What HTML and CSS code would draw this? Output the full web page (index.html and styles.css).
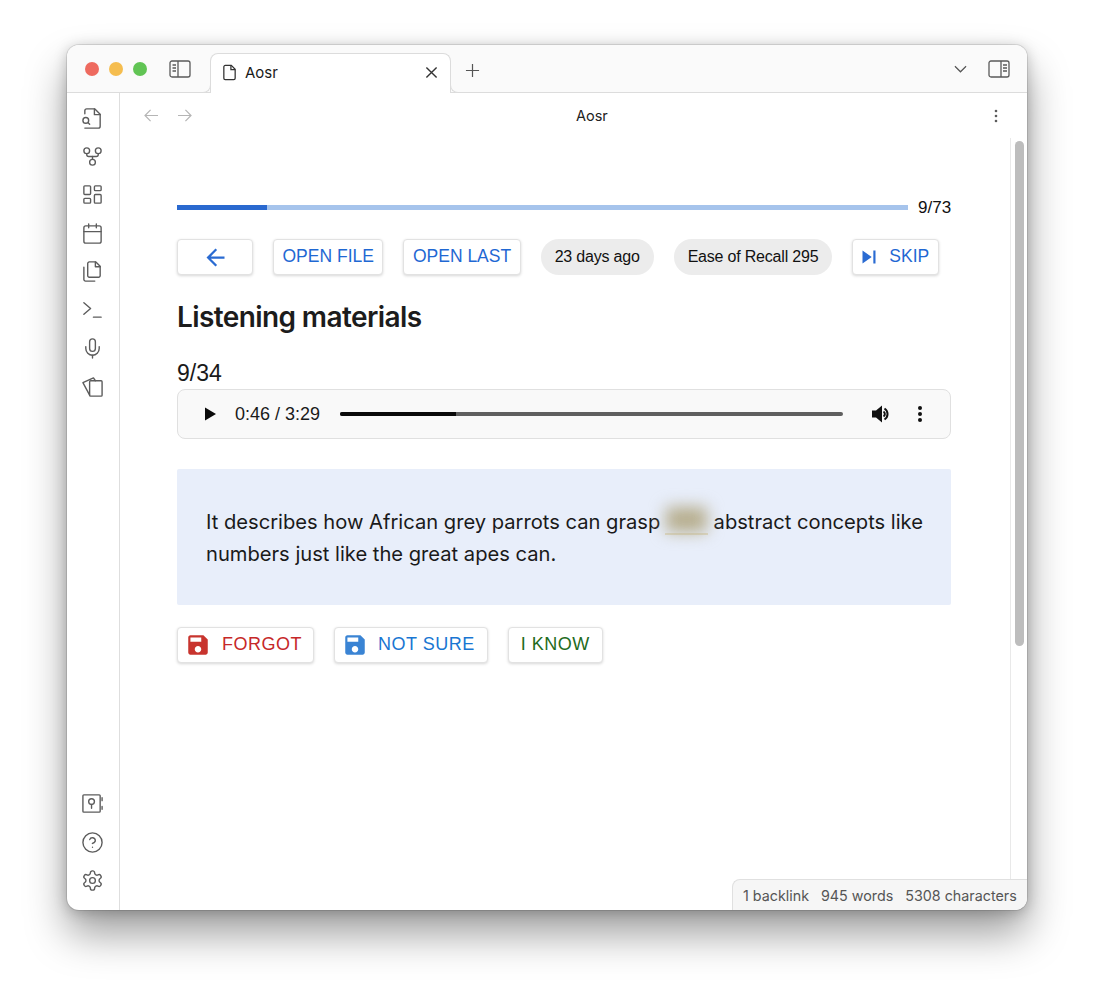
FILE: index.html
```html
<!DOCTYPE html>
<html lang="en">
<head>
<meta charset="utf-8">
<title>Aosr</title>
<link rel="stylesheet" href="styles.css">
</head>
<body>
<div class="window">
  <header class="titlebar">
    <div class="lights"><span class="light red"></span><span class="light yellow"></span><span class="light green"></span></div>
    <svg class="tb-toggle" viewBox="0 0 22 18"><rect x="1" y="1" width="20" height="16" rx="2"/><path d="M9 1v16M3.500 5H7M3.500 8H7M3.500 11H7"/></svg>
    <div class="tab">
      <svg class="tab-file" viewBox="0 0 24 24"><path d="M14.500 2H6a2 2 0 0 0-2 2v16a2 2 0 0 0 2 2h12a2 2 0 0 0 2-2V7.500z"/><path d="M14 2v6h6"/></svg>
      <span class="tab-title">Aosr</span>
      <svg class="tab-close" viewBox="0 0 14 14"><path d="M1.500 1.500l11 11M12.500 1.500l-11 11"/></svg>
    </div>
    <svg class="tab-plus" viewBox="0 0 16 16"><path d="M8 1v14M1 8h14"/></svg>
    <div class="tb-right">
      <svg class="tb-chevron" viewBox="0 0 14 8"><path d="M1 1l6 6 6-6"/></svg>
      <svg class="tb-toggle" viewBox="0 0 22 18"><rect x="1" y="1" width="20" height="16" rx="2"/><path d="M13 1v16M15 5h4M15 8h4M15 11h4"/></svg>
    </div>
  </header>
  <div class="main">
    <nav class="ribbon">
      <div class="ribbon-group">
        <svg class="ri" viewBox="0 0 24 24"><path d="M4 22h14a2 2 0 0 0 2-2V7.500L14.500 2H6a2 2 0 0 0-2 2v3"/><path d="M14 2v6h6"/><circle cx="5" cy="14" r="3"/><path d="m9 18-1.500-1.500"/></svg>
        <svg class="ri" viewBox="0 0 24 24"><circle cx="12" cy="18" r="3"/><circle cx="6" cy="6" r="3"/><circle cx="18" cy="6" r="3"/><path d="M18 9v1a2 2 0 0 1-2 2H8a2 2 0 0 1-2-2V9"/><path d="M12 12v3"/></svg>
        <svg class="ri" viewBox="0 0 24 24"><rect x="3" y="3" width="7" height="9" rx="1"/><rect x="14" y="3" width="7" height="5" rx="1"/><rect x="14" y="12" width="7" height="9" rx="1"/><rect x="3" y="16" width="7" height="5" rx="1"/></svg>
        <svg class="ri" viewBox="0 0 24 24"><rect x="3" y="4" width="18" height="18" rx="2"/><path d="M16 2v4M8 2v4M3 10h18"/></svg>
        <svg class="ri" viewBox="0 0 24 24"><path d="M15.500 2H8.600c-.4 0-.8.2-1.100.5-.3.3-.5.7-.5 1.100v12.800c0 .4.2.8.5 1.100.3.3.7.5 1.100.5h9.800c.4 0 .8-.2 1.100-.5.3-.3.5-.7.5-1.100V6.500L15.500 2z"/><path d="M3 7.600v12.800c0 .4.2.8.5 1.100.3.3.7.5 1.100.5h9.800"/><path d="M15 2v5h5"/></svg>
        <svg class="ri" viewBox="0 0 24 24"><path d="M3 17l7-6-7-6"/><path d="M13 20h8"/></svg>
        <svg class="ri" viewBox="0 0 24 24"><path d="M12 2a3 3 0 0 0-3 3v7a3 3 0 0 0 6 0V5a3 3 0 0 0-3-3Z"/><path d="M19 10v2a7 7 0 0 1-14 0v-2"/><path d="M12 19v3"/></svg>
        <svg class="ri" viewBox="0 0 24 24"><rect x="9" y="6" width="13" height="16" rx="1"/><path d="M9 21 2 8l11-5 2 3"/></svg>
      </div>
      <div class="ribbon-group">
        <svg class="ri" viewBox="0 0 24 24"><rect x="2" y="3" width="18" height="18" rx="1"/><circle cx="11" cy="10" r="3"/><path d="M11 13v4M22 6v3M22 15v3"/></svg>
        <svg class="ri" viewBox="0 0 24 24"><circle cx="12" cy="12" r="10"/><path d="M9.090 9a3 3 0 0 1 5.830 1c0 2-3 3-3 3"/><path d="M12 17h.01"/></svg>
        <svg class="ri" viewBox="0 0 24 24"><path d="M12.220 2h-.44a2 2 0 0 0-2 2v.18a2 2 0 0 1-1 1.730l-.43.25a2 2 0 0 1-2 0l-.15-.08a2 2 0 0 0-2.730.73l-.22.38a2 2 0 0 0 .73 2.730l.15.1a2 2 0 0 1 1 1.720v.51a2 2 0 0 1-1 1.740l-.15.09a2 2 0 0 0-.73 2.730l.22.38a2 2 0 0 0 2.730.73l.15-.08a2 2 0 0 1 2 0l.43.25a2 2 0 0 1 1 1.730V20a2 2 0 0 0 2 2h.44a2 2 0 0 0 2-2v-.18a2 2 0 0 1 1-1.730l.43-.25a2 2 0 0 1 2 0l.15.08a2 2 0 0 0 2.730-.73l.22-.39a2 2 0 0 0-.73-2.730l-.15-.08a2 2 0 0 1-1-1.740v-.5a2 2 0 0 1 1-1.740l.15-.09a2 2 0 0 0 .73-2.730l-.22-.38a2 2 0 0 0-2.730-.73l-.15.08a2 2 0 0 1-2 0l-.43-.25a2 2 0 0 1-1-1.730V4a2 2 0 0 0-2-2z"/><circle cx="12" cy="12" r="3"/></svg>
      </div>
    </nav>
    <section class="pane">
      <div class="pane-head">
        <div class="pane-nav">
          <svg class="nav-arrow" viewBox="0 0 16 14"><path d="M15 7H1M7 1 1 7l6 6"/></svg>
          <svg class="nav-arrow" viewBox="0 0 16 14"><path d="M1 7h14M9 1l6 6-6 6"/></svg>
        </div>
        <div class="pane-title">Aosr</div>
        <svg class="pane-more" viewBox="0 0 4 14"><circle cx="2" cy="2" r="1.300"/><circle cx="2" cy="7" r="1.300"/><circle cx="2" cy="12" r="1.300"/></svg>
      </div>
      <div class="pane-body">
        <div class="scroll">
          <div class="progress-row">
            <div class="progress"><div class="progress-fill"></div></div>
            <span class="progress-label">9/73</span>
          </div>
          <div class="btn-row top-actions">
            <button class="btn btn-back"><svg class="back-icon" viewBox="0 0 24 24"><path d="M20 11H7.830l5.590-5.590L12 4l-8 8 8 8 1.410-1.410L7.830 13H20v-2z"/></svg></button>
            <button class="btn">OPEN FILE</button>
            <button class="btn">OPEN LAST</button>
            <span class="pill">23 days ago</span>
            <span class="pill">Ease of Recall 295</span>
            <button class="btn btn-skip"><svg class="skip-icon" viewBox="0 0 24 24"><path d="M6 18l8.500-6L6 6v12zM16 6v12h2V6h-2z"/></svg>SKIP</button>
          </div>
          <h1 class="heading">Listening materials</h1>
          <div class="count">9/34</div>
          <div class="audio">
            <svg class="play" viewBox="0 0 12 14"><path d="M0 0l12 7-12 7z"/></svg>
            <span class="time">0:46 / 3:29</span>
            <div class="track"><div class="track-fill"></div></div>
            <svg class="volume" viewBox="0 0 20 20"><path d="M0 6.500h4L10 1.500v17l-6-5H0z"/><path class="vol-wave" d="M12.500 4.500a6.500 6.500 0 0 1 0 11M11.500 7.500a3 3 0 0 1 0 5"/></svg>
            <svg class="audio-more" viewBox="0 0 4 16"><circle cx="2" cy="2" r="2"/><circle cx="2" cy="8" r="2"/><circle cx="2" cy="14" r="2"/></svg>
          </div>
          <div class="card">It describes how African grey parrots can grasp <span class="hidden-word"></span> abstract concepts like numbers just like the great apes can.</div>
          <div class="btn-row answers">
            <button class="btn btn-forgot"><svg class="save-icon" viewBox="0 0 24 24"><path d="M17 3H5c-1.110 0-2 .9-2 2v14c0 1.100.89 2 2 2h14c1.100 0 2-.9 2-2V7l-4-4zm-5 16c-1.660 0-3-1.340-3-3s1.340-3 3-3 3 1.340 3 3-1.340 3-3 3zm3-10H5V5h10v4z"/></svg>FORGOT</button>
            <button class="btn btn-unsure"><svg class="save-icon" viewBox="0 0 24 24"><path d="M17 3H5c-1.110 0-2 .9-2 2v14c0 1.100.89 2 2 2h14c1.100 0 2-.9 2-2V7l-4-4zm-5 16c-1.660 0-3-1.340-3-3s1.340-3 3-3 3 1.340 3 3-1.340 3-3 3zm3-10H5V5h10v4z"/></svg>NOT SURE</button>
            <button class="btn btn-know">I KNOW</button>
          </div>
        </div>
        <div class="scrollbar"><div class="thumb"></div></div>
      </div>
      <div class="status"><span>1 backlink</span><span>945 words</span><span>5308 characters</span></div>
    </section>
  </div>
</div>
</body>
</html>
```

FILE: styles.css
```css
* { box-sizing: border-box; }
html, body { margin: 0; padding: 0; }
body { width: 1094px; height: 998px; padding: 45px 67px 0; background: #fff; overflow: hidden; font-family: "Liberation Sans", Arial, sans-serif; color: #1a1a1a; }
svg { display: block; flex: none; }

.window { width: 960px; height: 865px; border-radius: 12px; background: #fff; overflow: hidden; display: flex; flex-direction: column; box-shadow: 0 0 0 1px rgba(0,0,0,.1), 0 24px 42px rgba(0,0,0,.38), 0 2px 14px rgba(0,0,0,.22); }

.titlebar { height: 48px; flex: none; display: flex; align-items: center; background: #fafafa; border-bottom: 1px solid #dcdcdc; padding-left: 18px; }
.lights { display: flex; gap: 10px; }
.light { width: 14px; height: 14px; border-radius: 50%; }
.red { background: #ee6a5f; }
.yellow { background: #f5bd4f; }
.green { background: #61c454; }
.tb-toggle { width: 22px; height: 18px; fill: none; stroke: #5a5a5a; stroke-width: 1.300; }
.titlebar > .tb-toggle { margin-left: 22px; }
.tab { position: relative; align-self: flex-end; width: 241px; height: 40px; margin: 0 0 -1px 19px; padding: 0 12px 2px 10px; display: flex; align-items: center; background: #fff; border: 1px solid #dcdcdc; border-bottom: 0; border-radius: 8px 8px 0 0; }
.tab::before, .tab::after { content: ""; position: absolute; bottom: 0; width: 8px; height: 8px; background: #fafafa; border-bottom: 1px solid #dcdcdc; }
.tab::before { left: -9px; border-right: 1px solid #dcdcdc; border-bottom-right-radius: 8px; }
.tab::after { right: -9px; border-left: 1px solid #dcdcdc; border-bottom-left-radius: 8px; }
.tab-file { width: 17px; height: 17px; fill: none; stroke: #333; stroke-width: 1.800; }
.tab-title { margin-left: 7px; font: 400 15px "Inter", sans-serif; color: #1a1a1a; }
.tab-close { width: 13px; height: 13px; margin-left: auto; fill: none; stroke: #333; stroke-width: 1.500; }
.tab-plus { width: 15px; height: 15px; margin: 3px 0 0 14px; fill: none; stroke: #555; stroke-width: 1.300; }
.tb-right { margin-left: auto; display: flex; align-items: center; gap: 21px; padding-right: 17px; }
.tb-chevron { width: 13px; height: 8px; fill: none; stroke: #555; stroke-width: 1.300; }

.main { flex: 1; min-height: 0; display: flex; }
.ribbon { width: 53px; flex: none; border-right: 1px solid #dedede; display: flex; flex-direction: column; justify-content: space-between; align-items: center; padding: 13.500px 1px 18px 0; }
.ribbon-group { display: flex; flex-direction: column; gap: 15.400px; align-items: center; }
.ri { width: 23px; height: 23px; fill: none; stroke: #5c5c5c; stroke-width: 1.450; stroke-linecap: round; stroke-linejoin: round; }

.pane { position: relative; flex: 1; min-width: 0; display: flex; flex-direction: column; }
.pane-head { height: 45px; flex: none; position: relative; display: flex; align-items: center; justify-content: space-between; padding: 0 29px 0 24px; }
.pane-nav { display: flex; gap: 18px; }
.nav-arrow { width: 15px; height: 13px; fill: none; stroke: #b5b5b5; stroke-width: 1.300; }
.pane-title { font: 400 14.500px "Inter", sans-serif; color: #222; position: absolute; left: 456px; top: 14px; }
.pane-more { width: 4px; height: 14px; fill: #5c5c5c; }

.pane-body { flex: 1; min-height: 0; display: flex; }
.scroll { flex: 1; min-width: 0; padding: 59px 59px 0 57px; }
.scrollbar { width: 17px; flex: none; border-left: 1px solid #e9e9e9; padding: 3px 3px 0 4px; }
.thumb { height: 505px; background: #bdbdbd; border-radius: 5px; }

.progress-row { display: flex; align-items: center; height: 20px; white-space: nowrap; }
.progress { width: 731px; height: 5px; flex: none; background: #a6c4ec; }
.progress-fill { width: 90px; height: 100%; background: #2a69cf; }
.progress-label { margin-left: 10px; padding-top: 2px; font-size: 17px; color: #111; }

.btn-row { display: flex; gap: 20px; margin-top: 22px; align-items: center; white-space: nowrap; }
.btn { height: 36px; padding: 0 8.500px 1px; display: inline-flex; flex: none; align-items: center; background: #fff; border: 1px solid #e2e2e2; border-radius: 4px; box-shadow: 0 1px 3px rgba(0,0,0,.16); font: 18px "Liberation Sans", Arial, sans-serif; letter-spacing: .5px; color: #1f68d3; }
.top-actions .btn { font-size: 17.500px; letter-spacing: 0; }
.top-actions .btn-back { width: 76px; justify-content: center; padding: 0; }
.back-icon { width: 27px; height: 27px; fill: #2a6bd2; }
.top-actions .btn-skip { padding: 0 9px 1px 3px; gap: 7px; }
.skip-icon { width: 26px; height: 26px; fill: #2a6bd2; }
.pill { height: 36px; padding: 0 14px; display: inline-flex; flex: none; align-items: center; background: #ececec; border-radius: 18px; font-size: 16px; letter-spacing: -.2px; color: #111; }

.heading { margin: 25px 0 0; font: 600 28px/34px "Inter", sans-serif; letter-spacing: -.6px; color: #1c1c1c; }
.count { margin-top: 26px; font-size: 23px; line-height: 26px; color: #1a1a1a; }
.audio { margin-top: 3px; height: 50px; display: flex; align-items: center; background: #f9f9f9; border: 1px solid #e0e0e0; border-radius: 8px; padding: 0 29px 0 27px; white-space: nowrap; }
.play { width: 11px; height: 14px; fill: #0a0a0a; }
.time { margin-left: 19px; font-size: 18px; color: #1a1a1a; }
.track { margin-left: 20px; width: 503px; height: 4px; flex: none; background: #5f5f5f; border-radius: 2px; overflow: hidden; }
.track-fill { width: 116px; height: 100%; background: #0a0a0a; }
.volume { width: 20px; height: 20px; margin-left: 29px; fill: #111; }
.vol-wave { fill: none; stroke: #111; stroke-width: 2; }
.audio-more { width: 4px; height: 16px; margin-left: 26px; fill: #111; }

.card { margin-top: 30px; height: 136px; padding: 37px 20px 0 29px; background: #e8eefa; font: 20.150px/32px "Inter", sans-serif; color: #1a1a1a; border-radius: 2px; }
.hidden-word { position: relative; display: inline-block; width: 43px; height: 16px; margin: 0 0 -6px -1px; border-bottom: 2px solid #dcd8c6; }
.hidden-word::before { content: ""; position: absolute; inset: -12px 1px 1px; background: #b6ad8c; filter: blur(8px); }

.answers { margin-top: 22px; }
.btn-forgot { color: #c62828; padding: 0 11px 1px 7px; gap: 11px; }
.btn-forgot .save-icon { fill: #c8342e; }
.btn-unsure { color: #1976d2; padding: 0 12px 1px 7px; gap: 10px; }
.btn-unsure .save-icon { fill: #3a84d4; }
.btn-know { color: #1f6b20; padding: 0 12px 1px; }
.save-icon { width: 26px; height: 26px; }

.status { position: absolute; right: 0; bottom: 0; width: 295px; height: 31px; display: flex; gap: 12px; align-items: center; padding: 0 0 0 10px; background: #f6f6f6; border: 1px solid #e0e0e0; border-width: 1px 0 0 1px; border-top-left-radius: 8px; font: 14.300px "Inter", sans-serif; color: #555; white-space: nowrap; }
```
